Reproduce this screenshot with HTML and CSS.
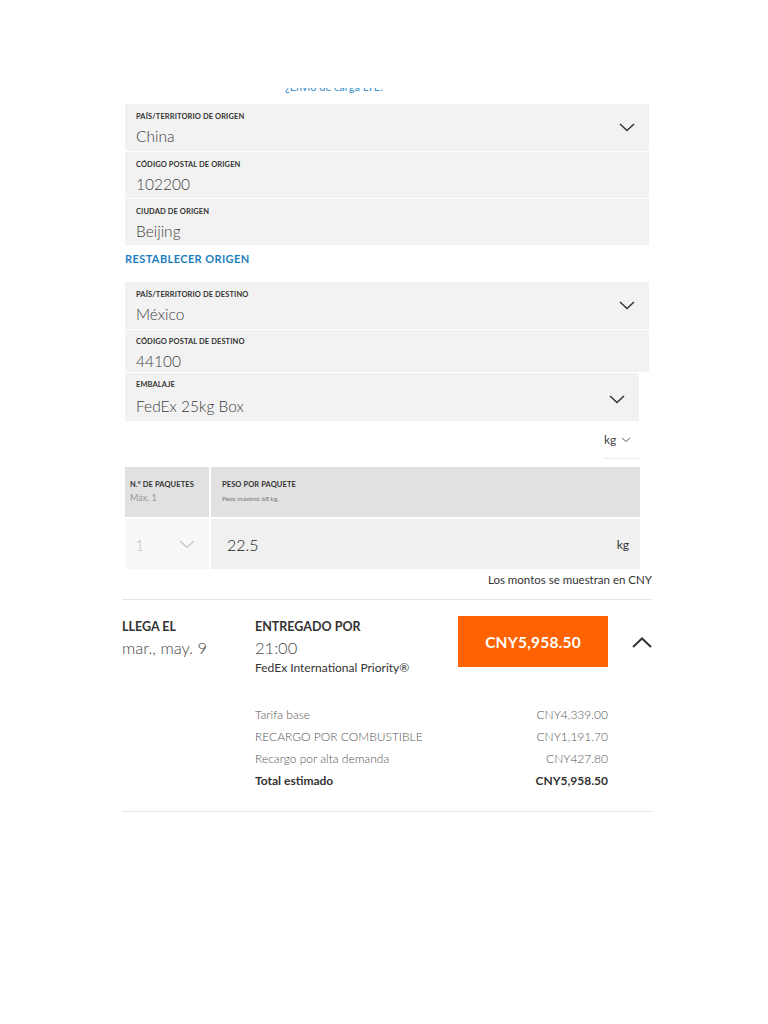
FILE: index.html
```html
<!DOCTYPE html>
<html lang="es">
<head>
<meta charset="utf-8">
<title>Cotización FedEx</title>
<link rel="stylesheet" href="styles.css">
</head>
<body>
<div class="page">
  <div class="ltl"><span>¿Envío de carga LTL?</span></div>

  <div class="fields">
    <div class="field h47">
      <div class="field-body">
        <div class="label">PAÍS/TERRITORIO DE ORIGEN</div>
        <div class="value">China</div>
      </div>
      <svg class="chev" width="16" height="9" viewBox="0 0 16 9"><path d="M1 1 L8 7.5 L15 1" fill="none" stroke="#333" stroke-width="1.5"/></svg>
    </div>
    <div class="field h46">
      <div class="field-body">
        <div class="label">CÓDIGO POSTAL DE ORIGEN</div>
        <div class="value">102200</div>
      </div>
    </div>
    <div class="field h46">
      <div class="field-body">
        <div class="label">CIUDAD DE ORIGEN</div>
        <div class="value">Beijing</div>
      </div>
    </div>
  </div>

  <div class="reset">RESTABLECER ORIGEN</div>

  <div class="fields">
    <div class="field h47">
      <div class="field-body">
        <div class="label">PAÍS/TERRITORIO DE DESTINO</div>
        <div class="value">México</div>
      </div>
      <svg class="chev" width="16" height="9" viewBox="0 0 16 9"><path d="M1 1 L8 7.5 L15 1" fill="none" stroke="#333" stroke-width="1.5"/></svg>
    </div>
    <div class="field h42">
      <div class="field-body tight">
        <div class="label">CÓDIGO POSTAL DE DESTINO</div>
        <div class="value">44100</div>
      </div>
    </div>
    <div class="field h48 narrow">
      <div class="field-body tight">
        <div class="label">EMBALAJE</div>
        <div class="value v-low">FedEx 25kg Box</div>
      </div>
      <svg class="chev" width="16" height="9" viewBox="0 0 16 9"><path d="M1 1 L8 7.5 L15 1" fill="none" stroke="#333" stroke-width="1.5"/></svg>
    </div>

    <div class="unit-row">
      <div class="unit">kg
        <svg width="10" height="6" viewBox="0 0 10 6"><path d="M1 1 L5 4.5 L9 1" fill="none" stroke="#666" stroke-width="1"/></svg>
      </div>
    </div>

    <div class="pkg-table">
      <div class="pkg-head">
        <div class="cell c1">
          <div class="label">N.º DE PAQUETES</div>
          <div class="sub">Máx. 1</div>
        </div>
        <div class="cell c2">
          <div class="label">PESO POR PAQUETE</div>
          <div class="sub tiny">Peso máximo 68 kg.</div>
        </div>
      </div>
      <div class="pkg-row">
        <div class="cell c1 qty">
          <span>1</span>
          <svg width="16" height="9" viewBox="0 0 16 9"><path d="M1 1 L8 7.5 L15 1" fill="none" stroke="#c4c4c4" stroke-width="1.2"/></svg>
        </div>
        <div class="cell c2 weight">
          <span class="w-val">22.5</span>
          <span class="w-unit">kg</span>
        </div>
      </div>
    </div>
  </div>

  <div class="currency">Los montos se muestran en CNY</div>

  <div class="result">
    <div class="result-top">
      <div class="col-arrive">
        <div class="head">LLEGA EL</div>
        <div class="big">mar., may. 9</div>
      </div>
      <div class="col-deliver">
        <div class="head">ENTREGADO POR</div>
        <div class="big">21:00</div>
        <div class="service">FedEx International Priority®</div>
      </div>
      <div class="price-btn">CNY5,958.50</div>
      <div class="toggle">
        <svg width="20" height="11" viewBox="0 0 20 11"><path d="M1 10 L10 1.5 L19 10" fill="none" stroke="#333" stroke-width="2"/></svg>
      </div>
    </div>
    <div class="breakdown">
      <div class="b-row"><span>Tarifa base</span><span>CNY4,339.00</span></div>
      <div class="b-row"><span>RECARGO POR COMBUSTIBLE</span><span>CNY1,191.70</span></div>
      <div class="b-row"><span>Recargo por alta demanda</span><span>CNY427.80</span></div>
      <div class="b-row total"><span>Total estimado</span><span>CNY5,958.50</span></div>
    </div>
  </div>
</div>
</body>
</html>
```

FILE: styles.css
```css
* { box-sizing: border-box; }

body {
  margin: 0;
  background: #fff;
  font-family: Lato, "Open Sans", Arial, sans-serif;
  color: #333;
}

.page {
  width: 530px;
  margin-left: 122px;
  padding-top: 88px;
}

.ltl {
  height: 8px;
  overflow: hidden;
  padding-left: 163px;
  margin-bottom: 8px;
}
.ltl span {
  display: block;
  margin-top: -9px;
  font-size: 11px;
  line-height: 16px;
  color: #3b8fca;
}

.fields {
  padding: 0 3px;
}

.field {
  display: flex;
  align-items: center;
  background: #f2f2f2;
  margin-bottom: 1px;
}
.h47 { height: 47px; }
.h46 { height: 46px; }
.h42 { height: 42px; }
.h48 { height: 48px; }
.narrow { margin-right: 10px; }

.field-body {
  flex: 1;
  align-self: flex-start;
  padding: 8px 11px 0;
}
.field-body.tight { padding-top: 7px; }

.label {
  font-size: 7.5px;
  line-height: 10px;
  font-weight: 700;
  color: #333;
  letter-spacing: 0.1px;
}

.value {
  margin-top: 4px;
  font-size: 15.5px;
  line-height: 20px;
  font-weight: 300;
  color: #3d3d3d;
}
.value.v-low { margin-top: 6px; }

.chev {
  margin-right: 14px;
  flex: none;
}
.narrow .chev { margin-right: 14px; margin-top: 4px; }

.reset {
  margin: 6px 0 15px 3px;
  font-size: 11px;
  line-height: 16px;
  font-weight: 700;
  color: #1d7ebe;
  letter-spacing: 0.4px;
}

.unit-row {
  display: flex;
  justify-content: flex-end;
  margin-right: 9px;
  margin-top: 11px;
}
.unit {
  display: flex;
  align-items: center;
  gap: 5px;
  width: 36px;
  padding-bottom: 10px;
  border-bottom: 1px solid #ececec;
  font-size: 12px;
  line-height: 16px;
  color: #444;
}

.pkg-table {
  margin-top: 8px;
  margin-right: 9px;
}
.pkg-head, .pkg-row {
  display: flex;
  gap: 2px;
}
.pkg-head { height: 50px; }
.pkg-row { height: 50px; margin-top: 2px; }
.cell.c1 { width: 84px; flex: none; }
.cell.c2 { flex: 1; }

.pkg-head .cell {
  background: #e1e1e1;
  padding: 13px 5px 0;
}
.pkg-head .c2 { padding-left: 11px; }
.sub {
  margin-top: 2px;
  font-size: 9px;
  line-height: 12px;
  color: #999;
}
.sub.tiny { font-size: 6.5px; color: #777; margin-top: 3px; }

.qty {
  background: #f8f8f8;
  display: flex;
  align-items: center;
  justify-content: space-between;
  padding: 0 14px 0 10px;
  font-size: 16px;
  font-weight: 300;
  color: #bdbdbd;
}
.weight {
  background: #f0f0f0;
  display: flex;
  align-items: center;
  justify-content: space-between;
  padding: 0 11px 0 16px;
}
.w-val { font-size: 16px; font-weight: 300; color: #222; }
.w-unit { font-size: 12px; color: #333; }

.currency {
  margin-top: 4px;
  text-align: right;
  font-size: 11.5px;
  line-height: 14px;
  color: #333;
  padding-bottom: 12px;
  border-bottom: 1px solid #e6e6e6;
}

.result {
  padding-top: 16px;
  padding-bottom: 19px;
  border-bottom: 1px solid #e6e6e6;
}
.result-top {
  display: flex;
  align-items: flex-start;
}
.col-arrive { width: 133px; flex: none; margin-top: 3px; }
.col-deliver { width: 203px; flex: none; margin-top: 3px; }
.head {
  font-size: 12.5px;
  line-height: 16px;
  font-weight: 700;
  color: #333;
}
.big {
  margin-top: 2px;
  font-size: 16.5px;
  line-height: 22px;
  font-weight: 300;
  color: #444;
}
.service {
  margin-top: 1px;
  font-size: 12px;
  line-height: 16px;
  color: #333;
}
.price-btn {
  width: 150px;
  height: 51px;
  flex: none;
  background: #ff6200;
  color: #fff;
  font-weight: 700;
  font-size: 15.5px;
  display: flex;
  align-items: center;
  justify-content: center;
  letter-spacing: 0.2px;
}
.toggle {
  flex: 1;
  height: 51px;
  display: flex;
  align-items: center;
  justify-content: flex-end;
  padding-top: 1px;
}

.breakdown {
  margin-top: 28px;
  margin-left: 133px;
  width: 353px;
}
.b-row {
  display: flex;
  justify-content: space-between;
  font-size: 12px;
  line-height: 22px;
  font-weight: 300;
  color: #555;
}
.b-row.total {
  font-weight: 700;
  color: #333;
}
```
